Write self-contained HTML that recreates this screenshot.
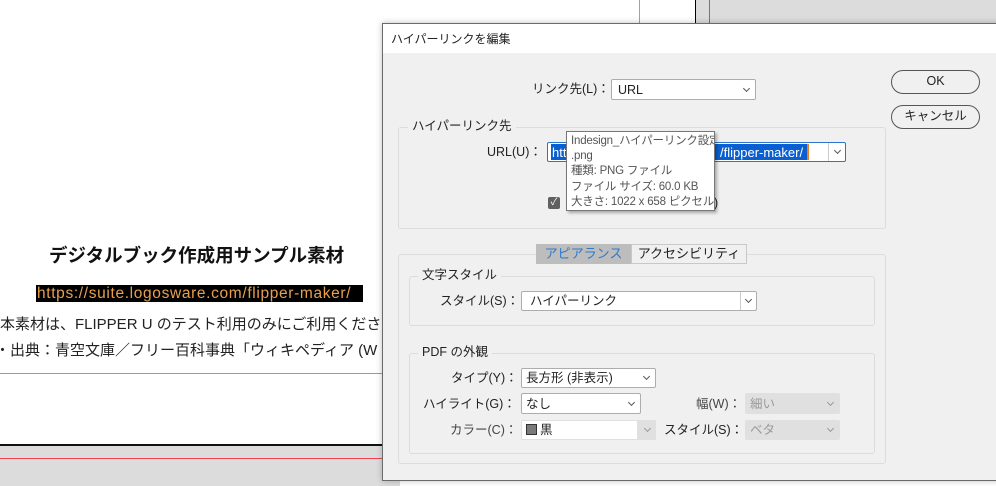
<!DOCTYPE html>
<html><head><meta charset="utf-8"><style>
*{margin:0;padding:0;box-sizing:border-box}
body{width:996px;height:486px;overflow:hidden;position:relative;background:#fff;font-family:"Liberation Sans","Noto Sans CJK JP",sans-serif;color:#222}
.a{position:absolute}
.t{font-size:12.5px;white-space:nowrap;line-height:1}
.sel{position:absolute;background:#fff;border:1px solid #adadad;border-radius:2px;font-size:12.5px;line-height:1;padding:4px 6px;white-space:nowrap}
.ar{position:absolute;right:6px;top:50%;width:5px;height:5px;margin-top:-4px;border-right:1px solid #555;border-bottom:1px solid #555;transform:rotate(45deg)}
.grp{position:absolute;border:1px solid #dcdcdc;border-radius:3px}
.lg{position:absolute;background:#f0f0f0;padding:0 4px;font-size:12.5px;line-height:1}
.dis{background:#e0e0e0;border-color:#e0e0e0;color:#9a9a9a}
.dis .ar{border-color:#999}
.btn{position:absolute;border:1.5px solid #555;border-radius:12px;background:#f0f0f0;font-size:12.5px;text-align:center;line-height:21px}
</style></head><body>
<div class="a" style="left:696px;top:0;width:300px;height:30px;background:#dcdcdc"></div>
<div class="a" style="left:639px;top:0;width:1px;height:25px;background:#c98ab0"></div>
<div class="a" style="left:695px;top:0;width:1px;height:25px;background:#000"></div>
<div class="a" style="left:709px;top:0;width:1px;height:25px;background:#f04050"></div>
<div class="a" style="left:0;top:445px;width:400px;height:41px;background:#dcdcdc"></div>
<div class="a" style="left:0;top:444px;width:400px;height:2px;background:#111"></div>
<div class="a" style="left:0;top:458px;width:400px;height:1px;background:#f04050"></div>
<div class="a" style="left:0;top:373px;width:400px;height:1px;background:#8a94e0"></div>
<div class="a" style="left:49px;top:242px;font-size:18.5px;font-weight:bold;color:#111;white-space:nowrap">デジタルブック作成用サンプル素材</div>
<div class="a" style="left:36px;top:285px;width:327px;height:17px;background:#000"></div>
<div class="a" style="left:37px;top:285px;font-size:15.5px;letter-spacing:0.65px;color:#e8a050;white-space:nowrap;line-height:17px">https://suite.logosware.com/flipper-maker/</div>
<div class="a" style="left:0;top:313px;font-size:15px;color:#222;white-space:nowrap">本素材は、FLIPPER U のテスト利用のみにご利用くださ</div>
<div class="a" style="left:-5px;top:339px;font-size:15px;color:#222;white-space:nowrap">・出典：青空文庫／フリー百科事典「ウィキペディア (W</div>
<div class="a" style="left:382px;top:23px;width:620px;height:458px;background:#f0f0f0;border:1px solid #6a6a6a;box-shadow:0 0 6px rgba(0,0,0,.25)"></div>
<div class="a" style="left:383px;top:24px;width:613px;height:29px;background:#fff"></div>
<div class="a t" style="left:391px;top:33px;font-size:12px">ハイパーリンクを編集</div>
<div class="btn" style="left:891px;top:70px;width:89px;height:24px">OK</div>
<div class="btn" style="left:891px;top:105px;width:89px;height:24px">キャンセル</div>
<div class="a t" style="left:532px;top:83px">リンク先(L)：</div>
<div class="sel" style="left:611px;top:79px;width:145px;height:21px">URL<span class="ar"></span></div>
<div class="grp" style="left:398px;top:127px;width:488px;height:102px"></div>
<div class="lg" style="left:408px;top:120px">ハイパーリンク先</div>
<div class="a t" style="left:487px;top:146px">URL(U)：</div>
<div class="sel" style="left:547px;top:142px;width:299px;height:20px;border-color:#2a74d0;padding:0"></div>
<div class="a" style="left:551px;top:144px;width:256px;height:16px;background:#0a5fd0"></div>
<div class="a t" style="left:552px;top:146px;color:#fff;font-size:13px">htt</div>
<div class="a t" style="left:720px;top:146px;color:#fff;font-size:13px">/flipper-maker/</div>
<div class="a" style="left:807px;top:144px;width:2px;height:16px;background:#e88020"></div>
<div class="a" style="left:828px;top:143px;width:1px;height:18px;background:#ccc"></div>
<div class="a" style="left:828px;top:143px;width:18px;height:18px"><span class="ar"></span></div>
<div class="a" style="left:548px;top:197px;width:12px;height:12px;background:#606060;border-radius:2px;color:#fff;font-size:10px;line-height:12px;text-align:center">✓</div>
<div class="a t" style="left:714px;top:197px">)</div>
<div class="a" style="left:566px;top:131px;width:149px;height:80px;background:#fff;border:1px solid #777;box-shadow:2px 2px 3px rgba(0,0,0,.3);padding:2px 4px;font-size:11.5px;letter-spacing:-0.2px;line-height:15.2px;color:#555;white-space:nowrap;overflow:hidden">Indesign_ハイパーリンク設定<br>.png<br>種類: PNG ファイル<br>ファイル サイズ: 60.0 KB<br>大きさ: 1022 x 658 ピクセル</div>
<div class="grp" style="left:398px;top:254px;width:488px;height:210px"></div>
<div class="a" style="left:536px;top:244px;width:211px;height:20px;border:1px solid #c8c8c8;background:#f0f0f0"></div>
<div class="a t" style="left:536px;top:244px;width:95px;height:20px;background:#bdbdbd;color:#2a7ad0;line-height:20px;text-align:center;font-size:13px">アピアランス</div>
<div class="a t" style="left:631px;top:244px;width:116px;height:20px;background:#f0f0f0;border:1px solid #c8c8c8;line-height:18px;text-align:center;font-size:13px">アクセシビリティ</div>
<div class="grp" style="left:409px;top:276px;width:466px;height:50px"></div>
<div class="lg" style="left:418px;top:269px">文字スタイル</div>
<div class="a t" style="left:440px;top:295px">スタイル(S)：</div>
<div class="sel" style="left:521px;top:291px;width:236px;height:20px;padding:3px 8px">ハイパーリンク</div>
<div class="a" style="left:740px;top:292px;width:1px;height:18px;background:#ccc"></div>
<div class="a" style="left:740px;top:291px;width:17px;height:20px"><span class="ar"></span></div>
<div class="grp" style="left:409px;top:353px;width:466px;height:101px"></div>
<div class="lg" style="left:418px;top:346px">PDF の外観</div>
<div class="a t" style="left:451px;top:372px">タイプ(Y)：</div>
<div class="sel" style="left:521px;top:368px;width:135px;height:20px;padding:3px 4px">長方形 (非表示)<span class="ar"></span></div>
<div class="a t" style="left:423px;top:398px">ハイライト(G)：</div>
<div class="sel" style="left:521px;top:393px;width:120px;height:21px;padding:4px 4px">なし<span class="ar"></span></div>
<div class="a t" style="left:696px;top:398px;color:#444">幅(W)：</div>
<div class="sel dis" style="left:745px;top:393px;width:95px;height:21px;padding:4px 4px">細い<span class="ar"></span></div>
<div class="a t" style="left:450px;top:424px;color:#444">カラー(C)：</div>
<div class="sel" style="left:521px;top:420px;width:135px;height:20px;padding:3px 4px;border-color:#e0e0e0"><span style="display:inline-block;width:11px;height:11px;background:#7a7a7a;border:1px solid #333;vertical-align:-1px;margin-right:3px"></span>黒</div>
<div class="a dis" style="left:637px;top:420px;width:19px;height:20px;background:#e0e0e0"><span class="ar"></span></div>
<div class="a t" style="left:664px;top:424px">スタイル(S)：</div>
<div class="sel dis" style="left:745px;top:420px;width:95px;height:20px;padding:3px 4px">ベタ<span class="ar"></span></div>
</body></html>
